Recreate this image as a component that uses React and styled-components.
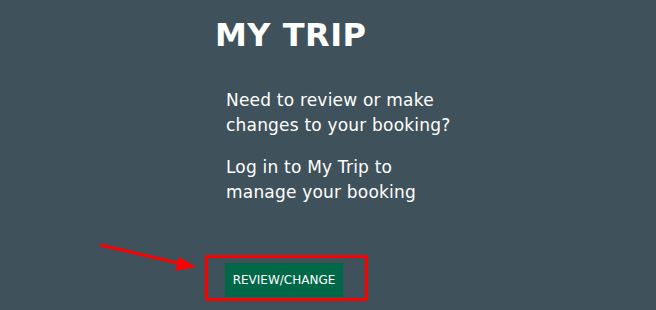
import React from "react";
import styled, { createGlobalStyle } from "styled-components";

const GlobalStyle = createGlobalStyle`
  html, body {
    margin: 0;
    padding: 0;
    background: #3f525b;
  }
  body {
    font-family: "DejaVu Sans", sans-serif;
  }
`;

const Page = styled.div`
  width: 656px;
  height: 310px;
  position: relative;
  overflow: hidden;
  background: #3f525b;
  color: #ffffff;
`;

const Content = styled.div`
  display: flex;
  flex-direction: column;
  padding: 15px 0 0 215px;
`;

const Title = styled.h1`
  margin: 0;
  font-family: "DejaVu Sans", sans-serif;
  font-size: 32px;
  font-weight: 700;
  line-height: 40px;
  letter-spacing: 0.5px;
`;

const Body = styled.div`
  display: flex;
  flex-direction: column;
  gap: 17px;
  padding: 33px 0 0 11px;
`;

const Para = styled.p`
  margin: 0;
  font-family: "DejaVu Sans", sans-serif;
  font-size: 17px;
  font-weight: 400;
  line-height: 25px;
  letter-spacing: 0.2px;
`;

const ButtonRow = styled.div`
  padding: 58px 0 0 10px;
`;

const Button = styled.div`
  display: inline-flex;
  align-items: center;
  justify-content: center;
  width: 118px;
  height: 34px;
  background: #006747;
  color: #ffffff;
  font-family: "DejaVu Sans", sans-serif;
  font-size: 12px;
`;

const Highlight = styled.div`
  position: absolute;
  left: 205px;
  top: 255px;
  width: 157px;
  height: 40px;
  border: 3px solid #ff0000;
  border-radius: 2px;
`;

const Arrow = styled.svg`
  position: absolute;
  left: 0;
  top: 0;
`;

export default function App() {
  return (
    <>
      <GlobalStyle />
      <Page>
        <Content>
          <Title>MY TRIP</Title>
          <Body>
            <Para>
              Need to review or make
              <br />
              changes to your booking?
            </Para>
            <Para>
              Log in to My Trip to
              <br />
              manage your booking
            </Para>
          </Body>
          <ButtonRow>
            <Button>REVIEW/CHANGE</Button>
          </ButtonRow>
        </Content>
        <Highlight />
        <Arrow width="656" height="310" viewBox="0 0 656 310">
          <line x1="100" y1="245" x2="182" y2="264" stroke="#ff0000" strokeWidth="3" />
          <polygon points="196,267 175,271 179,257" fill="#ff0000" />
        </Arrow>
      </Page>
    </>
  );
}
